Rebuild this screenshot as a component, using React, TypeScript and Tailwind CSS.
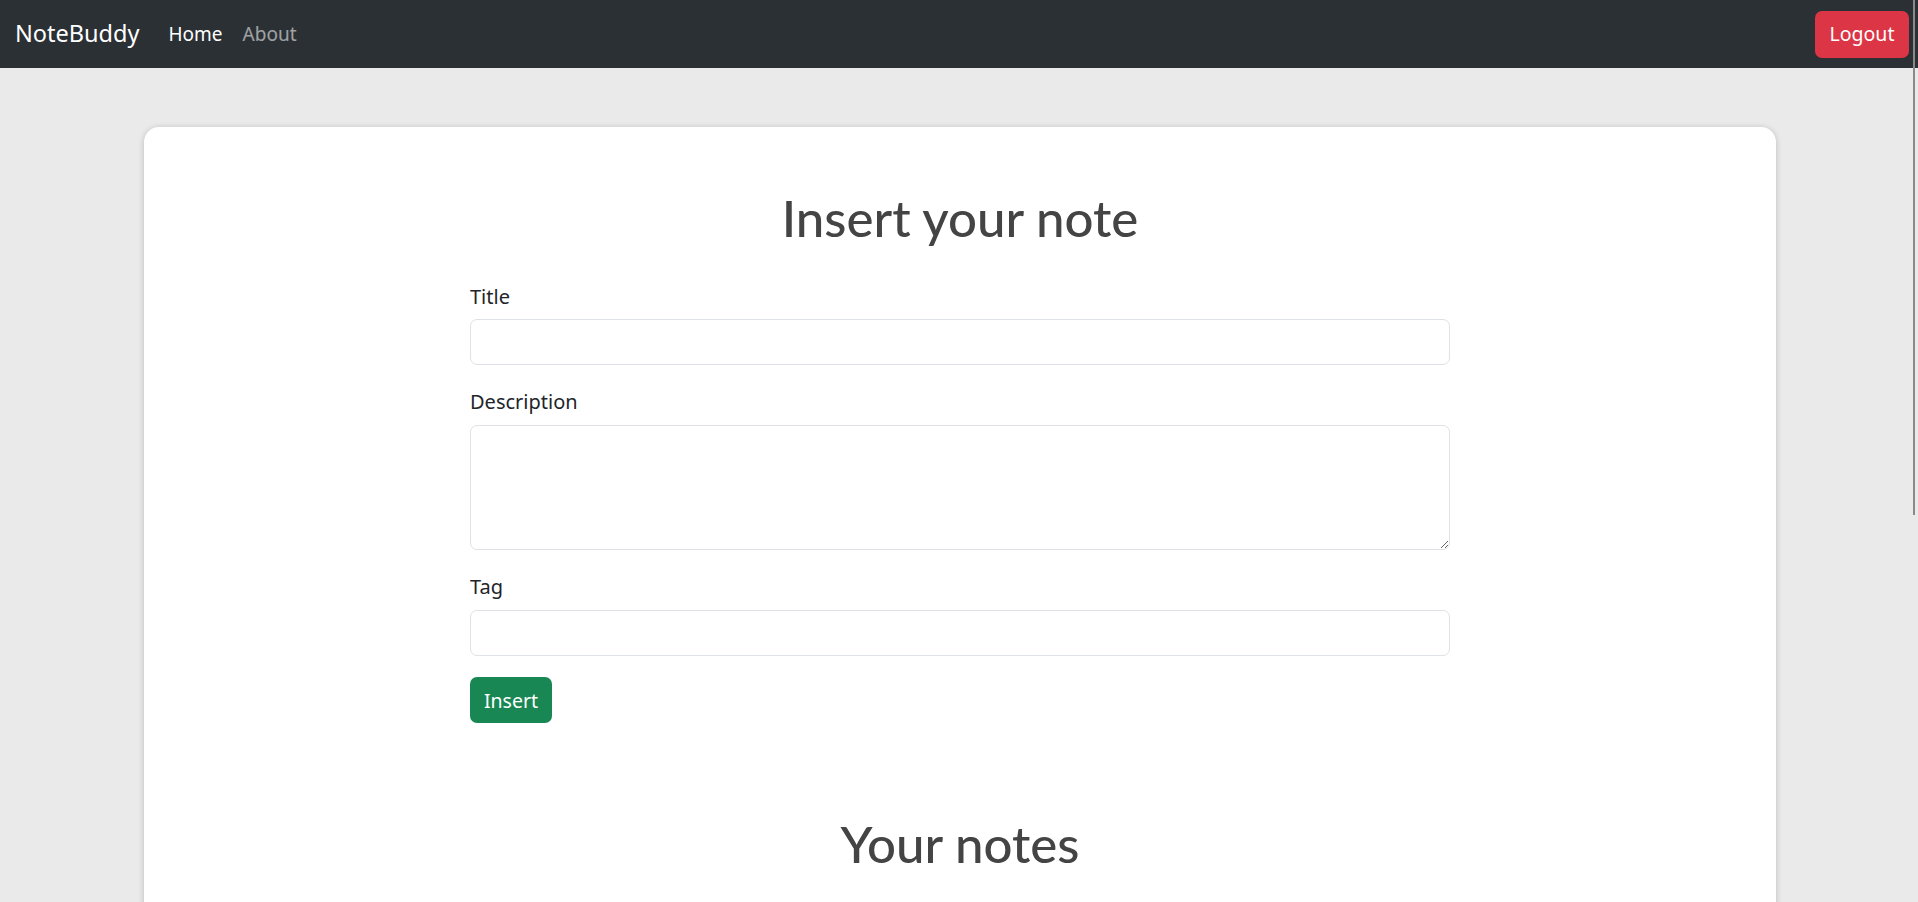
import { useState } from 'react';

export default function App() {
  const [title, setTitle] = useState('');
  const [description, setDescription] = useState('');
  const [tag, setTag] = useState('');

  return (
    <div className="relative h-[902px] overflow-hidden bg-[#eaeaea]" style={{ fontFamily: '"Noto Sans", sans-serif' }}>
      {/* Navbar */}
      <nav className="h-[68px] bg-[#2b3035] flex items-center justify-between pl-[15px] pr-[9px]">
        <div className="flex items-center">
          <span className="text-[23.5px] text-white mr-[29px]">NoteBuddy</span>
          <a className="text-[19px] text-white mr-[20px]">Home</a>
          <a className="text-[19px] text-white/55">About</a>
        </div>
        <button className="h-[47px] w-[94px] rounded-[7px] bg-[#dc3545] text-white text-[19.5px]">Logout</button>
      </nav>

      {/* Card */}
      <div className="ml-[144px] mr-[142px] mt-[59px] bg-white rounded-[15px] shadow-[0_1px_6px_rgba(0,0,0,0.2)] pt-[60px] pb-20">
        <h1 className="text-center text-[51px] leading-[1.2] text-[#444] font-medium" style={{ fontFamily: 'Lato, sans-serif' }}>
          Insert your note
        </h1>

        <form className="w-[980px] mx-auto mt-[34px]" onSubmit={e => e.preventDefault()}>
          <label className="block text-[20px] leading-[30px] text-[#212529] mb-[7px]">Title</label>
          <input
            value={title}
            onChange={e => setTitle(e.target.value)}
            className="block w-full h-[46px] border border-[#dee2e6] rounded-[7px] px-4 outline-none"
          />

          <label className="block text-[20px] leading-[30px] text-[#212529] mt-[22px] mb-[8px]">Description</label>
          <textarea
            value={description}
            onChange={e => setDescription(e.target.value)}
            className="block w-full h-[125px] border border-[#dee2e6] rounded-[7px] px-4 py-2 outline-none"
          />

          <label className="block text-[20px] leading-[30px] text-[#212529] mt-[22px] mb-[8px]">Tag</label>
          <input
            value={tag}
            onChange={e => setTag(e.target.value)}
            className="block w-full h-[46px] border border-[#dee2e6] rounded-[7px] px-4 outline-none"
          />

          <button className="mt-[21px] h-[46px] w-[82px] rounded-[7px] bg-[#198754] text-white text-[19.5px]">Insert</button>
        </form>

        <h2 className="text-center text-[51px] leading-[1.2] text-[#444] font-medium mt-[90px]" style={{ fontFamily: 'Lato, sans-serif' }}>
          Your notes
        </h2>
      </div>

      {/* scrollbar thumb */}
      <div className="absolute top-0 right-[3px] w-[2px] h-[515px] bg-[#8a8a8a]" />
    </div>
  );
}
